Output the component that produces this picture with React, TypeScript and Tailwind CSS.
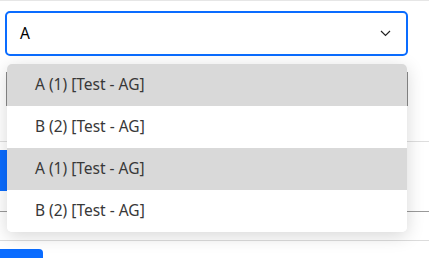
import React from "react";

const items = ["A (1) [Test - AG]", "B (2) [Test - AG]", "A (1) [Test - AG]", "B (2) [Test - AG]"];

export default function App() {
  return (
    <div
      className="relative w-[429px] h-[258px] overflow-hidden bg-white border-t border-[#e6e6e6]"
      style={{ fontFamily: '"Noto Sans", "Open Sans", sans-serif' }}
    >
      {/* select */}
      <div className="ml-[5px] mt-[10px] w-[403px] h-[45px] rounded-[5px] border-2 border-[#0a6cff] flex items-center justify-between pl-[13px] pr-[15px]">
        <span className="text-[15.5px] text-black">A</span>
        <svg width="11" height="7" viewBox="0 0 11 7" fill="none">
          <path d="M1 1L5.5 5.5L10 1" stroke="#222" strokeWidth="1.2" />
        </svg>
      </div>

      {/* background content */}
      <div className="ml-[6px] mt-[16px] w-[402px] h-[34px] border-x border-[#8a8a8a]" />
      <div className="mt-[35px] h-px bg-[#dedede]" />
      <div className="mt-[8px] w-[40px] h-[41px] bg-[#0a6cff] rounded-r-[4px]" />
      <div className="mt-[20px] h-px bg-[#9a9a9a]" />
      <div className="mt-[28px] h-px bg-[#dcdcdc]" />
      <div className="mt-[8px] w-[43px] h-[12px] bg-[#0a6cff] rounded-tr-[4px]" />

      {/* dropdown */}
      <div className="absolute left-[7px] top-[63px] w-[400px] rounded-[5px] bg-white overflow-hidden shadow-[0_4px_18px_rgba(0,0,0,0.16)]">
        {items.map((t, i) => (
          <div
            key={i}
            className={`h-[42px] flex items-center pl-[28px] text-[15.5px] text-[#383838] ${i % 2 === 0 ? "bg-[#d9d9d9]" : "bg-white"}`}
          >
            {t}
          </div>
        ))}
      </div>
    </div>
  );
}
